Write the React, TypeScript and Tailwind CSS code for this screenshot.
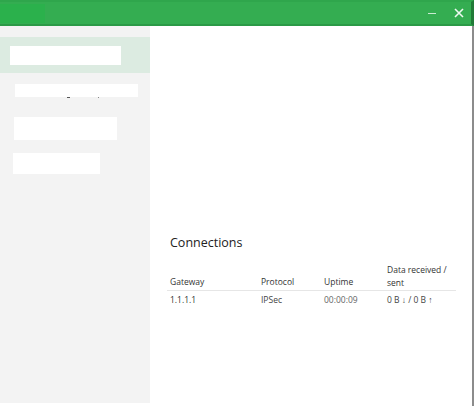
export default function App() {
  const font = { fontFamily: '"Open Sans", "Noto Sans", sans-serif' }
  return (
    <div className="w-[474px] h-[406px] flex flex-col bg-white overflow-hidden" style={font}>
      <div className="h-[26px] flex items-center bg-[#34ad51] border-t-2 border-t-[#2fa64c] border-b-2 border-b-[#2b9a46] border-r-[3px] border-r-[#217a37]">
        <div className="w-[45px] h-[19px] bg-[#2bb14c]" />
        <div className="flex-1" />
        <div className="w-[28px] flex justify-center">
          <div className="w-[8px] h-[1px] bg-[#c9ebd1]" />
        </div>
        <div className="w-[25px] flex justify-center">
          <svg width="10" height="10" viewBox="0 0 10 10">
            <path d="M1 1L9 9M9 1L1 9" stroke="#eef9f1" strokeWidth="1.6" />
          </svg>
        </div>
      </div>
      <div className="flex-1 flex border-r-[2px] border-r-[#8c8c8c]">
        <div className="w-[150px] bg-[#f3f3f3] mb-[3px] pt-[11px] flex flex-col">
          <div className="h-[36px] bg-[#dcebe1] flex items-center pl-[10px]">
            <div className="w-[111px] h-[19px] bg-white" />
          </div>
          <div className="mt-[11px] ml-[15px] relative">
            <div className="w-[123px] h-[13px] bg-white" />
            <div className="absolute left-[52px] top-[13px] w-[3px] h-[1px] bg-[#555]" />
            <div className="absolute left-[83px] top-[13px] w-[1px] h-[1px] bg-[#888]" />
          </div>
          <div className="mt-[20px] ml-[14px] w-[103px] h-[23px] bg-white" />
          <div className="mt-[13px] ml-[13px] w-[87px] h-[21px] bg-white" />
        </div>
        <div className="flex-1 pl-[17px] pr-[14px] pt-[208px]">
          <h2 className="ml-[3px] text-[12.5px] text-[#222] leading-[18px]">Connections</h2>
          <table className="mt-[11px] w-[289px] text-[8.5px] border-collapse">
            <thead>
              <tr className="border-b border-[#e6e6e6] text-[#333]">
                <th className="w-[91px] text-left font-normal align-bottom pl-[3px] pb-[1px]">Gateway</th>
                <th className="w-[63px] text-left font-normal align-bottom pl-[3px] pb-[1px]">Protocol</th>
                <th className="w-[63px] text-left font-normal align-bottom pl-[3px] pb-[1px]">Uptime</th>
                <th className="text-left font-normal align-bottom pl-[3px] pb-[1px] leading-[13px]">Data received /<br />sent</th>
              </tr>
            </thead>
            <tbody>
              <tr>
                <td className="pl-[3px] pt-[3px] text-[#333]">1.1.1.1</td>
                <td className="pl-[3px] pt-[3px] text-[#444]">IPSec</td>
                <td className="pl-[3px] pt-[3px] text-[#666]">00:00:09</td>
                <td className="pl-[3px] pt-[3px] text-[#444]">0 B ↓ / 0 B ↑</td>
              </tr>
            </tbody>
          </table>
        </div>
      </div>
    </div>
  )
}
